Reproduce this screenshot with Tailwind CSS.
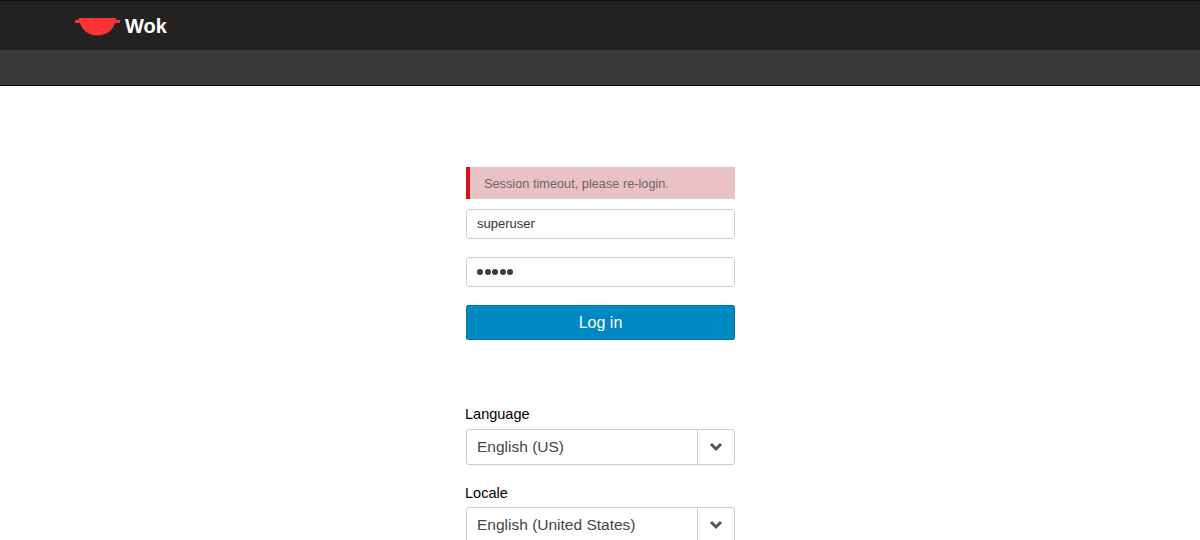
<!DOCTYPE html>
<html>
<head>
<meta charset="utf-8">
<script src="https://cdn.jsdelivr.net/npm/@tailwindcss/browser@4"></script>
</head>
<body class="bg-white overflow-hidden font-['Liberation_Sans',Arial,sans-serif] text-[#333]">
<div class="h-[540px] overflow-hidden">
<header class="h-[86px] border-b border-black border-t border-t-[#111]">
  <div class="h-[49px] bg-[#222222] pl-[75px] flex items-center">
    <svg width="45" height="19" viewBox="0 0 45 19" class="mt-[2px]">
      <path d="M3.500 3 L4 1 H41 L41.500 3 H45 V6 H40 C38 13 31 18.500 22.500 18.500 C14 18.500 7 13 5 6 H0 V3 Z" fill="#fb3333"/>
    </svg>
    <span class="ml-[5px] text-[20px] font-bold text-white leading-none">Wok</span>
  </div>
  <div class="h-[35px] bg-[#3a3a3c]"></div>
</header>
<main class="w-[269px] ml-[466px]">
  <div class="mt-[81px] h-[32px] bg-[#eac1c5] border-l-[4px] border-[#d9101c] pl-[14px] pt-[1px] flex items-center text-[12.750px] text-[#6e6468]">Session timeout, please re-login.</div>
  <div class="mt-[10px] h-[30px] border border-[#cccccc] rounded-[3px] bg-white px-[10px] flex items-center text-[13px] text-[#333]">superuser</div>
  <div class="mt-[18px] h-[30px] border border-[#cccccc] rounded-[3px] bg-white px-[10px] flex items-center gap-[1.500px]">
    <span class="w-[6px] h-[6px] rounded-full bg-[#3c3c44]"></span>
    <span class="w-[6px] h-[6px] rounded-full bg-[#3c3c44]"></span>
    <span class="w-[6px] h-[6px] rounded-full bg-[#3c3c44]"></span>
    <span class="w-[6px] h-[6px] rounded-full bg-[#3c3c44]"></span>
    <span class="w-[6px] h-[6px] rounded-full bg-[#3c3c44]"></span>
  </div>
  <button class="mt-[18px] w-full h-[35px] bg-[#0088c2] border border-[#0079ad] rounded-[2px] text-white text-[16px] flex items-center justify-center">Log in</button>
  <div class="mt-[66px] -ml-[1px] text-[14.500px] leading-[16px] text-black">Language</div>
  <div class="mt-[7px] h-[36px] border border-[#cccccc] rounded-[3px] flex items-center text-[15.500px] text-[#444]">
    <span class="flex-1 pl-[10px]">English (US)</span>
    <span class="w-[37px] h-full border-l border-[#cccccc] flex items-center justify-center">
      <svg width="14" height="10" viewBox="0 0 14 10"><path d="M2 2 L7 7 L12 2" fill="none" stroke="#555" stroke-width="3"/></svg>
    </span>
  </div>
  <div class="mt-[20px] -ml-[1px] text-[14.500px] leading-[16px] text-black">Locale</div>
  <div class="mt-[6px] h-[36px] border border-[#cccccc] rounded-[3px] flex items-center text-[15.500px] text-[#444]">
    <span class="flex-1 pl-[10px]">English (United States)</span>
    <span class="w-[37px] h-full border-l border-[#cccccc] flex items-center justify-center">
      <svg width="14" height="10" viewBox="0 0 14 10"><path d="M2 2 L7 7 L12 2" fill="none" stroke="#555" stroke-width="3"/></svg>
    </span>
  </div>
</main>
</div>
</body>
</html>
